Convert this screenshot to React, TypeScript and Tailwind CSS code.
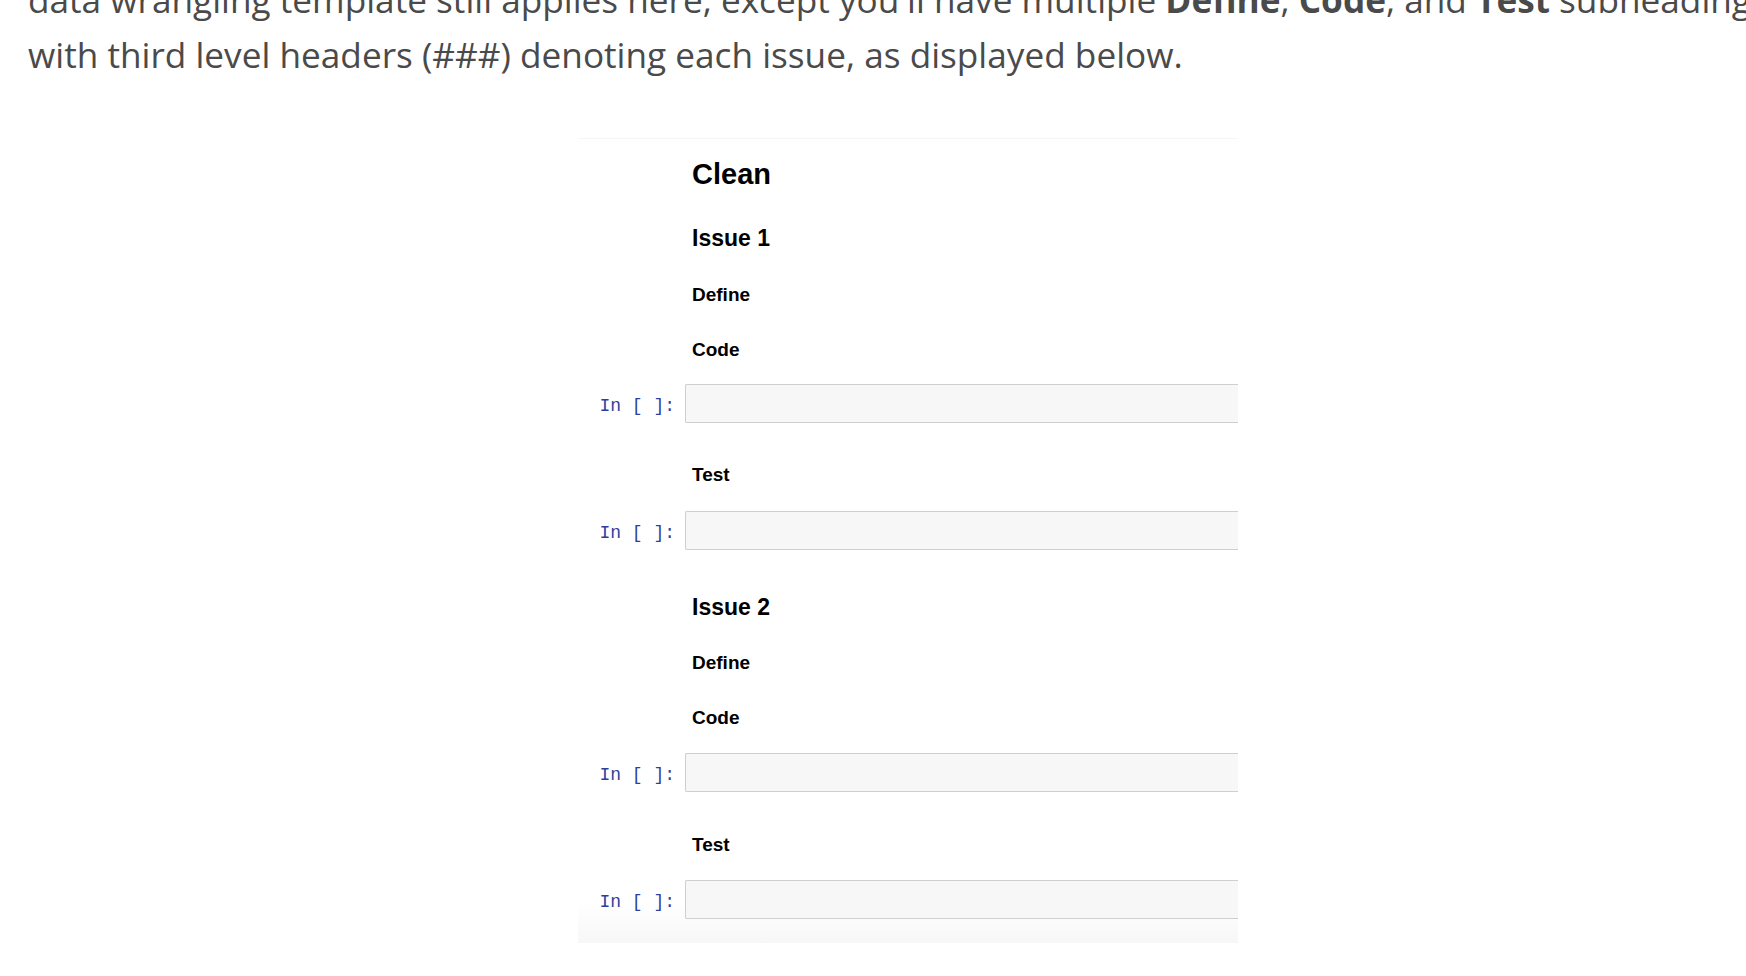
import { FC } from 'react';

// Jupyter-style notebook cell with an empty input area
const CodeCell: FC<{ className?: string }> = ({ className = '' }) => (
    <div className={`flex items-stretch h-[39px] ${className}`}>
        <div className="w-[97px] shrink-0 flex items-center justify-end pt-[4px] text-[18px] leading-none text-[#303f9f] font-['Liberation_Mono',monospace] whitespace-pre">
            In [ ]:
        </div>
        <div className="ml-[10px] flex-1 rounded-l-[2px] border border-r-0 border-[#cfcfcf] bg-[#f7f7f7]" />
    </div>
);

const Heading: FC<{ text: string; size: 'h2' | 'h3' | 'h4'; className?: string }> = ({ text, size, className = '' }) => {
    const sizes = {
        h2: 'h-[40px] leading-[40px] text-[29px]',
        h3: 'h-[40px] leading-[40px] text-[23px]',
        h4: 'h-[30px] leading-[30px] text-[19px]',
    };
    return (
        <div className={`pl-[114px] font-bold text-black font-['Liberation_Sans',Arial,sans-serif] ${sizes[size]} ${className}`}>
            {text}
        </div>
    );
};

const App: FC = () => {
    return (
        <div className="w-full h-screen overflow-hidden bg-white">
            {/* Article text, clipped at the top and right like the window */}
            <div className="-mt-[28px] pl-[28px] text-[35.2px] leading-[55px] text-[#4a4a4a] font-['Open_Sans',sans-serif] whitespace-nowrap">
                <div>
                    data wrangling template still applies here, except you'll have multiple <b>Define</b>, <b>Code</b>, and <b>Test</b> subheadings
                </div>
                <div>with third level headers (###) denoting each issue, as displayed below.</div>
            </div>

            {/* Screenshot of the notebook */}
            <div className="mt-[56px] ml-[578px] w-[660px] h-[805px] flex flex-col border-t border-[#f6f6f6] pt-[15px] bg-[linear-gradient(to_bottom,#ffffff_95%,#f7f7f7)]">
                <Heading text="Clean" size="h2" />
                <Heading text="Issue 1" size="h3" className="mt-[24px]" />
                <Heading text="Define" size="h4" className="mt-[22px]" />
                <Heading text="Code" size="h4" className="mt-[25px]" />
                <CodeCell className="mt-[19px]" />
                <Heading text="Test" size="h4" className="mt-[37px]" />
                <CodeCell className="mt-[21px]" />
                <Heading text="Issue 2" size="h3" className="mt-[37px]" />
                <Heading text="Define" size="h4" className="mt-[21px]" />
                <Heading text="Code" size="h4" className="mt-[25px]" />
                <CodeCell className="mt-[20px]" />
                <Heading text="Test" size="h4" className="mt-[38px]" />
                <CodeCell className="mt-[20px]" />
            </div>
        </div>
    );
};

export default App;
